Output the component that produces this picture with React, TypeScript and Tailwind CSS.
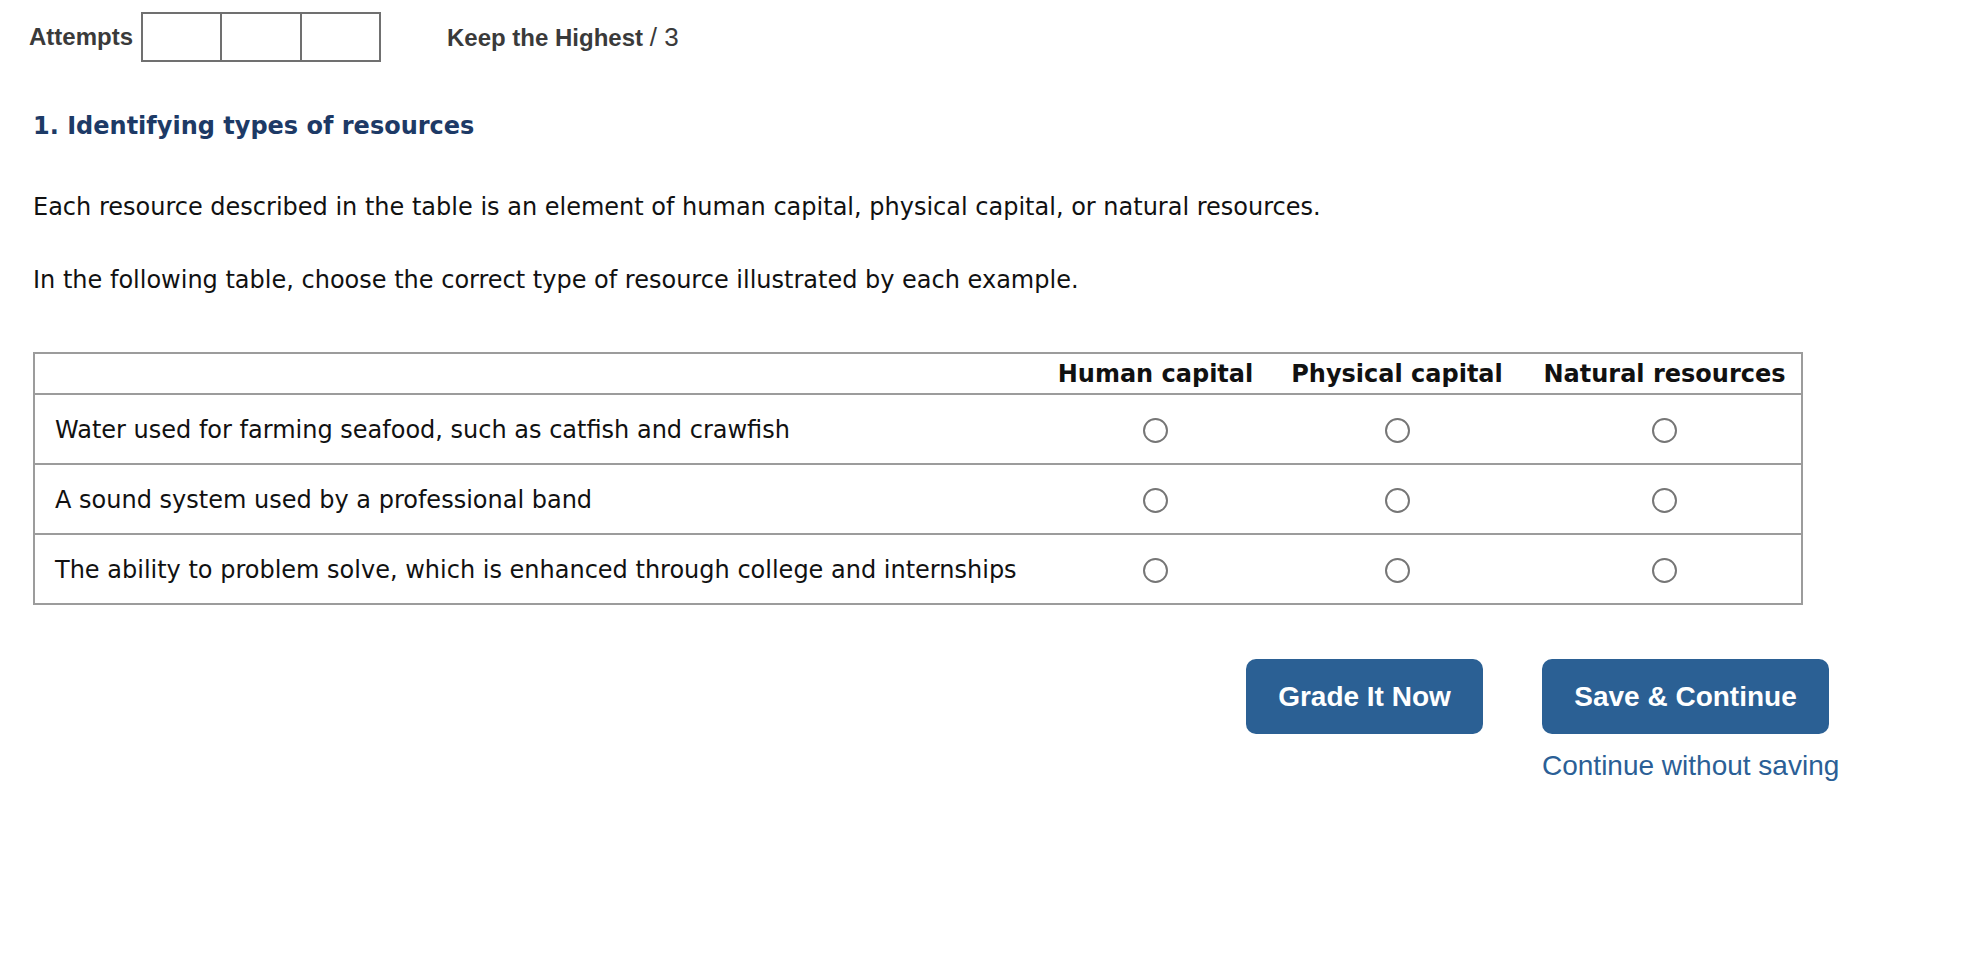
import React, { useState } from 'react';

const verdana = "font-['DejaVu_Sans',Verdana,sans-serif]";
const helvetica = "font-['Liberation_Sans',Helvetica,Arial,sans-serif]";

const rows = [
  'Water used for farming seafood, such as catfish and crawfish',
  'A sound system used by a professional band',
  'The ability to problem solve, which is enhanced through college and internships',
];

const columns = ['Human capital', 'Physical capital', 'Natural resources'];

const Radio = ({ checked, onClick }: { checked: boolean; onClick: () => void }) => (
  <button
    type="button"
    onClick={onClick}
    className="w-[25px] h-[25px] rounded-full border-2 border-[#767676] bg-white flex items-center justify-center"
  >
    {checked && <span className="w-[13px] h-[13px] rounded-full bg-[#2b6094]" />}
  </button>
);

const App = () => {
  const [answers, setAnswers] = useState<Record<number, number>>({});

  return (
    <div className="w-[1986px] min-h-[976px] bg-white text-[#111]">
      {/* Attempts bar */}
      <div className={`flex items-center pt-[12px] pl-[29px] ${helvetica} text-[24px] text-[#3a3a3a]`}>
        <span className="font-bold mr-[8px]">Attempts</span>
        <div className="flex w-[240px] h-[50px] border-2 border-[#707070]">
          <div className="flex-1" />
          <div className="flex-1 border-l-2 border-[#707070]" />
          <div className="flex-1 border-l-2 border-[#707070]" />
        </div>
        <span className="ml-[66px]">
          <span className="font-bold">Keep the Highest</span> <span className="text-[26px]">/ 3</span>
        </span>
      </div>

      <div className="pl-[33px]">
        <h2 className={`${verdana} font-bold text-[24px] leading-[30px] text-[#1d3a66] mt-[49px]`}>
          1. Identifying types of resources
        </h2>

        <p className={`${verdana} text-[24px] leading-[30px] mt-[51px]`}>
          Each resource described in the table is an element of human capital, physical capital, or natural resources.
        </p>
        <p className={`${verdana} text-[24px] leading-[30px] mt-[43px]`}>
          In the following table, choose the correct type of resource illustrated by each example.
        </p>

        {/* Answer table */}
        <div className={`${verdana} text-[24px] w-[1770px] mt-[57px] border-2 border-[#9c9c9c]`}>
          <div className="grid grid-cols-[1010px_221px_262px_273px] h-[39px] items-center font-bold">
            <div />
            {columns.map((c) => (
              <div key={c} className="text-center">
                {c}
              </div>
            ))}
          </div>
          {rows.map((r, ri) => (
            <div
              key={r}
              className="grid grid-cols-[1010px_221px_262px_273px] h-[70px] items-center border-t-2 border-[#9c9c9c] pt-[2px]"
            >
              <div className="pl-[20px]">{r}</div>
              {columns.map((c, ci) => (
                <div key={c} className="flex justify-center">
                  <Radio checked={answers[ri] === ci} onClick={() => setAnswers({ ...answers, [ri]: ci })} />
                </div>
              ))}
            </div>
          ))}
        </div>
      </div>

      {/* Actions */}
      <div className={`${helvetica} w-[1850px] flex justify-end items-start gap-[59px] mt-[54px]`}>
        <button className="w-[237px] h-[75px] rounded-[10px] bg-[#2b6094] text-white font-bold text-[28px]">
          Grade It Now
        </button>
        <div className="flex flex-col items-start w-[308px]">
          <button className="w-[287px] h-[75px] rounded-[10px] bg-[#2b6094] text-white font-bold text-[28px]">
            Save &amp; Continue
          </button>
          <a href="#" className="mt-[15px] text-[28px] leading-[34px] text-[#2b5f96]">
            Continue without saving
          </a>
        </div>
      </div>
    </div>
  );
};

export default App;
